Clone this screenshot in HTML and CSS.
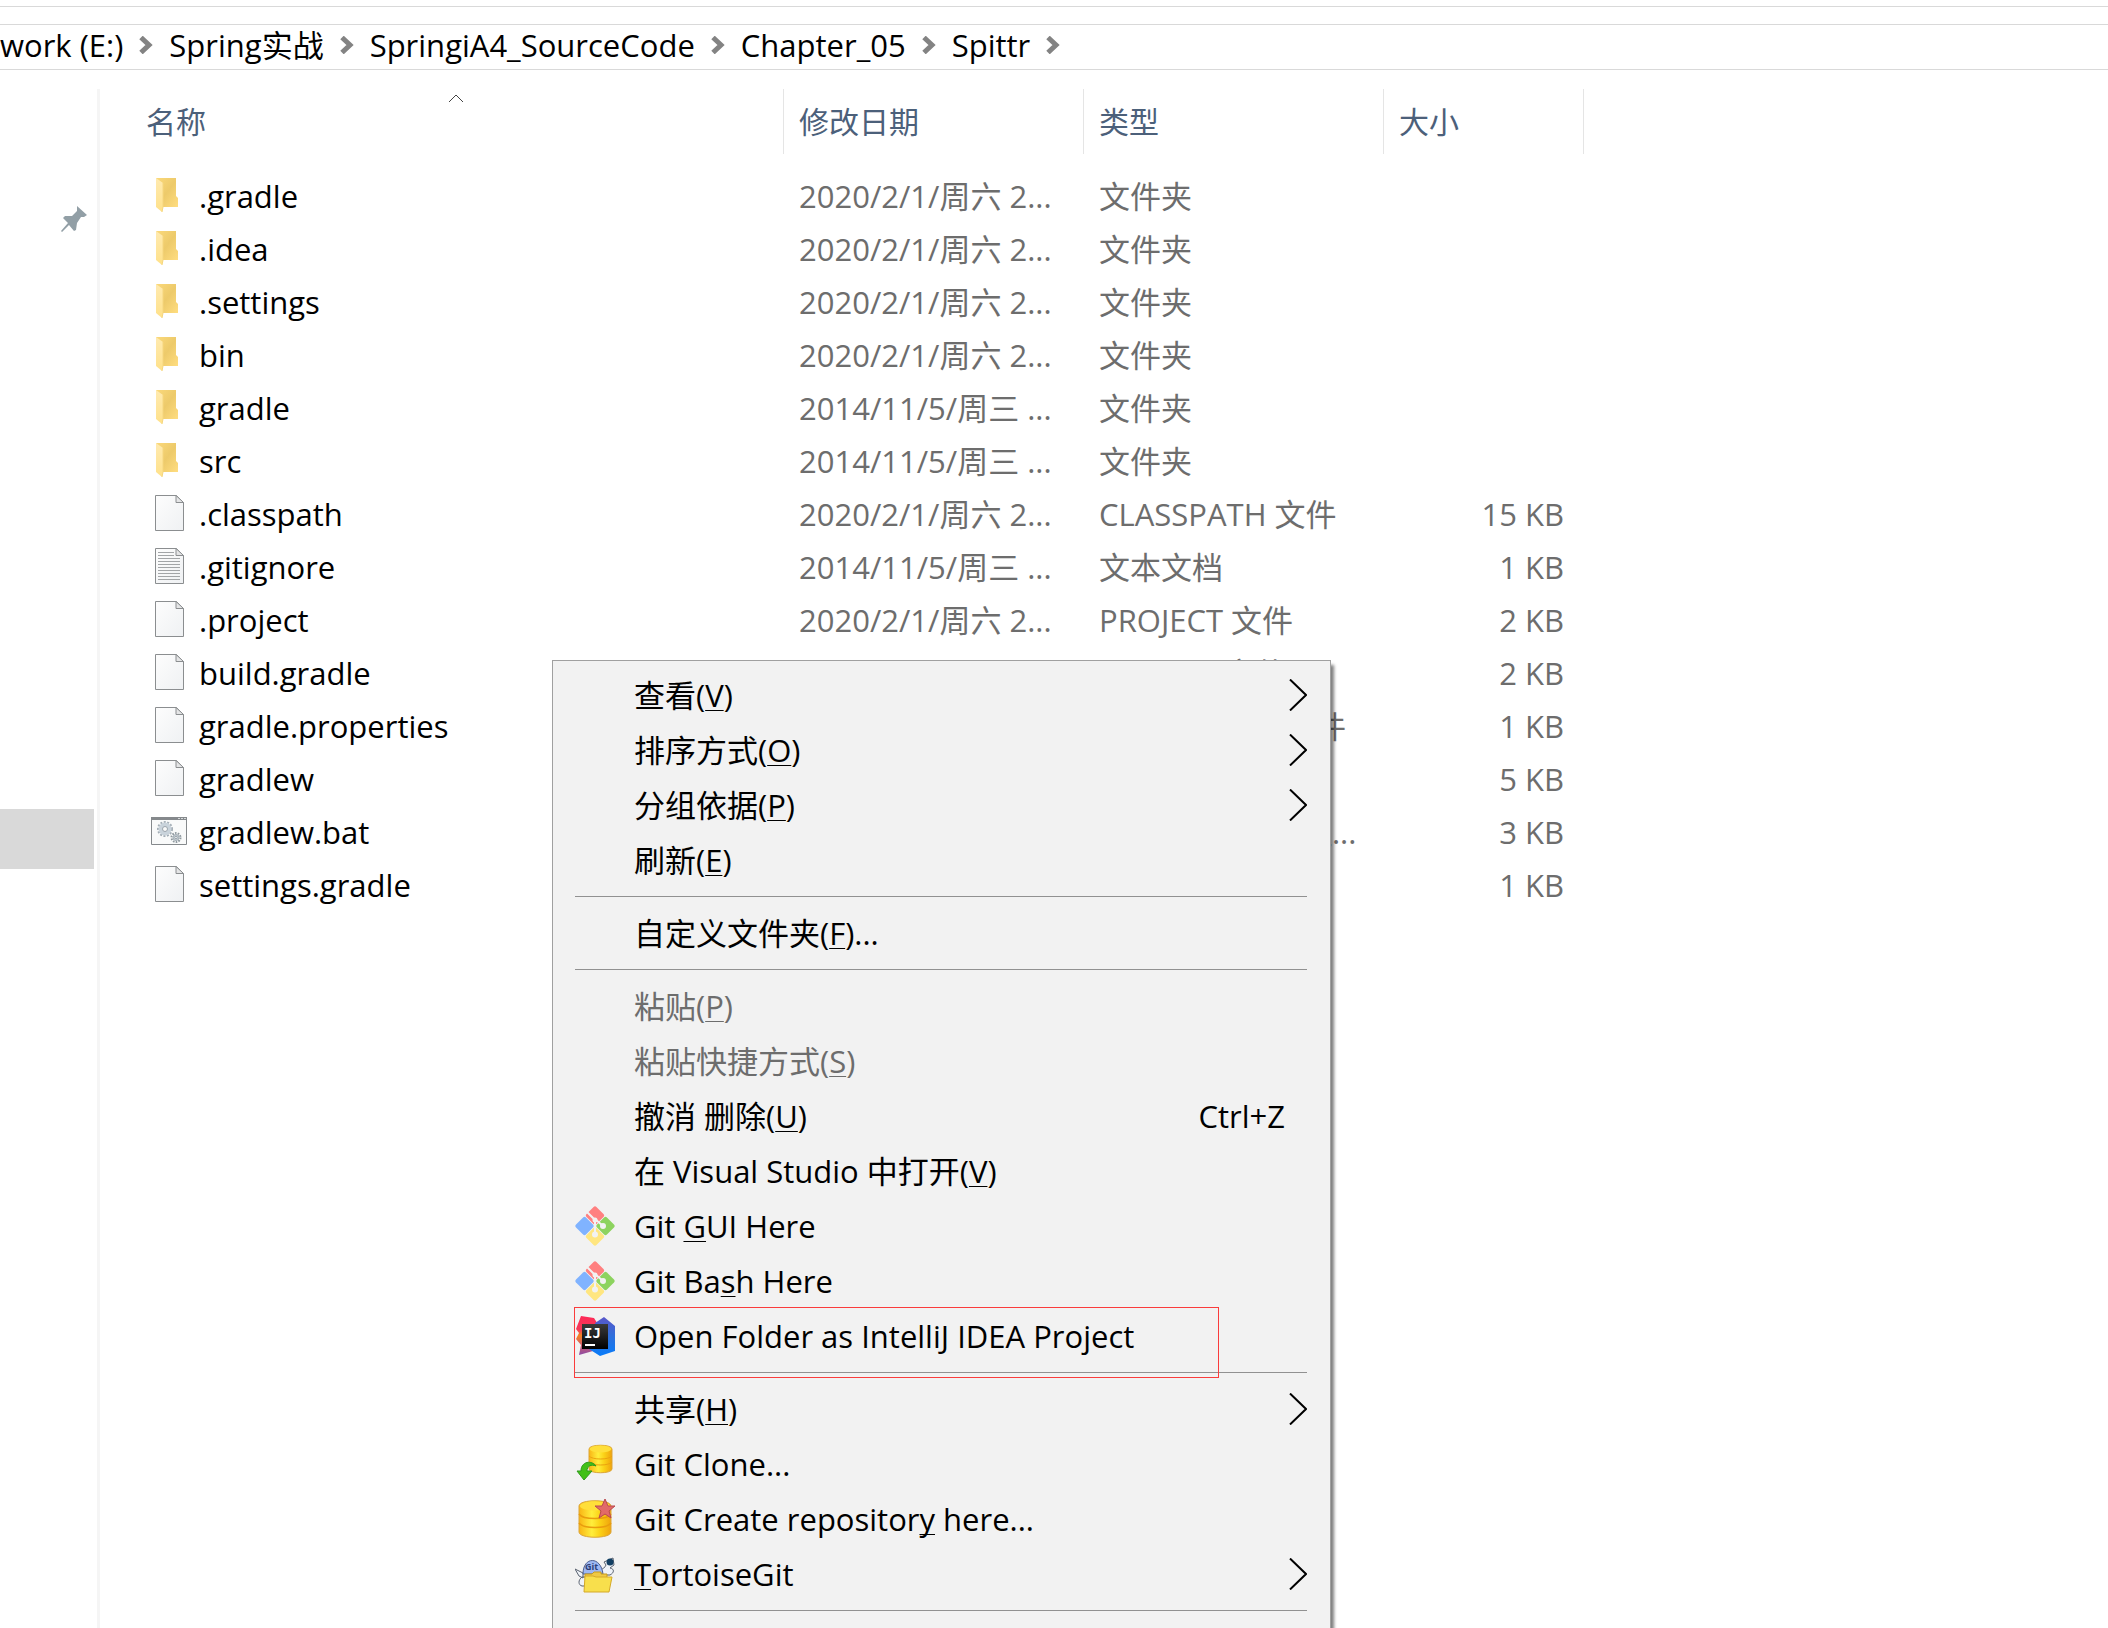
FILE: index.html
```
<!DOCTYPE html>
<html lang="zh-CN">
<head>
    <meta charset="UTF-8">
    <meta name="viewport" content="width=device-width, initial-scale=1.0">
    <title>Spittr</title>
    <link rel="stylesheet" href="styles.css">
</head>
<body>
    <!-- shared icons -->
    <svg class="icon-defs" aria-hidden="true">
        <defs>
            <linearGradient id="folder-back" x1="0" y1="0" x2="1" y2="1">
                <stop offset="0" stop-color="#fbd97b"/>
                <stop offset="0.5" stop-color="#edca6a"/>
                <stop offset="1" stop-color="#ffdd80"/>
            </linearGradient>
            <linearGradient id="folder-front" x1="0" y1="0" x2="0" y2="1">
                <stop offset="0" stop-color="#ffeab0"/>
                <stop offset="1" stop-color="#ffe189"/>
            </linearGradient>
            <linearGradient id="paper" x1="0" y1="0" x2="1" y2="1">
                <stop offset="0" stop-color="#fdfdfd"/>
                <stop offset="1" stop-color="#eff1f3"/>
            </linearGradient>
            <linearGradient id="gold" x1="0" y1="0" x2="1" y2="0">
                <stop offset="0" stop-color="#f9b414"/>
                <stop offset="0.4" stop-color="#ffee3c"/>
                <stop offset="0.65" stop-color="#fbd217"/>
                <stop offset="1" stop-color="#f0a30c"/>
            </linearGradient>
            <linearGradient id="idea-left" x1="0" y1="0" x2="0" y2="1">
                <stop offset="0" stop-color="#fe2857"/>
                <stop offset="0.35" stop-color="#f43a58"/>
                <stop offset="0.5" stop-color="#f58220"/>
                <stop offset="0.7" stop-color="#d9635f"/>
                <stop offset="1" stop-color="#8b4aa8"/>
            </linearGradient>
            <linearGradient id="idea-right" x1="0" y1="0" x2="0" y2="1">
                <stop offset="0" stop-color="#5a57c9"/>
                <stop offset="0.5" stop-color="#2d6fdc"/>
                <stop offset="1" stop-color="#087cfa"/>
            </linearGradient>
            <linearGradient id="idea-box" x1="0" y1="0" x2="0" y2="1">
                <stop offset="0" stop-color="#3a3a3a"/>
                <stop offset="1" stop-color="#000"/>
            </linearGradient>
        </defs>
        <symbol id="icon-folder" viewBox="0 0 36 36">
            <path d="M5 1h20v18l2 2v9H11z" fill="url(#folder-back)"/>
            <path d="M5 1l7 5v24l-1 5-6-5z" fill="url(#folder-front)"/>
            <path d="M12 6v24l-1 5" fill="none" stroke="#f5d67e"/>
        </symbol>
        <symbol id="icon-file" viewBox="0 0 36 36">
            <path d="M4.500.500h21l7 7v28h-28z" fill="url(#paper)" stroke="#8b8e90"/>
            <path d="M25 .500v7h7.500z" fill="#e4e5e6" stroke="#8b8e90"/>
        </symbol>
        <symbol id="icon-text" viewBox="0 0 36 36">
            <path d="M4.500.500h21l7 7v28h-28z" fill="url(#paper)" stroke="#8b8e90"/>
            <path d="M25 .500v7h7.500z" fill="#e4e5e6" stroke="#8b8e90"/>
            <path d="M7 4.500h16M7 7.500h16M7 10.500h22M7 13.500h22M7 16.500h22M7 19.500h22M7 22.500h22M7 25.500h22M7 28.500h22M7 31.500h22" stroke="#a2a5a7"/>
        </symbol>
        <symbol id="icon-batch" viewBox="0 0 36 36">
            <path d="M.500 4.500h35v27H.500z" fill="#f9fafa" stroke="#85898c"/>
            <path d="M0 4h36v3H0z" fill="#85898c"/>
            <path d="M27 5.500h2M30 5.500h2M33 5.500h2" stroke="#d7dadb"/>
            <circle cx="14" cy="16" r="7" fill="none" stroke="#a3adb5" stroke-width="2" stroke-dasharray="2 1.500"/>
            <circle cx="14" cy="16" r="4.500" fill="none" stroke="#c9d3db" stroke-width="4"/>
            <circle cx="14" cy="16" r="2.500" fill="#f9fafa" stroke="#98a2aa"/>
            <circle cx="25" cy="24.500" r="4.500" fill="none" stroke="#8f999f" stroke-width="2" stroke-dasharray="1.600 1.200"/>
            <circle cx="25" cy="24.500" r="3" fill="#c3ccd2" stroke="#a3adb5"/>
            <circle cx="25" cy="24.500" r="1.200" fill="#f9fafa" stroke="#98a2aa"/>
        </symbol>
        <symbol id="icon-crumb" viewBox="0 0 14 18">
            <path d="M2 1.500L10 9 2 16.500" fill="none" stroke="#838383" stroke-width="5"/>
        </symbol>
        <symbol id="icon-submenu" viewBox="0 0 18 32">
            <path d="M1 0.500L17 16 1 31.500" fill="none" stroke="#000" stroke-width="2"/>
        </symbol>
        <symbol id="icon-git" viewBox="0 0 40 40">
            <rect x="2.500" y="13" width="14" height="14" rx="2" fill="#80b3ff" transform="rotate(45 9.500 20)"/>
            <rect x="23.500" y="13" width="14" height="14" rx="2" fill="#8dd35f" transform="rotate(45 30.500 20)"/>
            <rect x="13" y="2.500" width="14" height="14" rx="2" fill="#ff8080" transform="rotate(45 20 9.500)"/>
            <rect x="13" y="23.500" width="14" height="14" rx="2" fill="#ffe680" transform="rotate(45 20 30.500)"/>
            <path d="M11 5l9 9v15M20 13l8 7" fill="none" stroke="#f2f2f2" stroke-width="2"/>
            <circle cx="20" cy="14" r="2.500" fill="#f2f2f2"/>
            <circle cx="28" cy="20" r="3" fill="#f2f2f2"/>
            <circle cx="20" cy="28.500" r="3" fill="#f2f2f2"/>
        </symbol>
        <symbol id="icon-clone" viewBox="0 0 40 40">
            <path d="M14 5c0-5 23-5 23 0v20c0 5-23 5-23 0z" fill="url(#gold)" stroke="#dba63a"/>
            <ellipse cx="25.500" cy="5" rx="11" ry="3.500" fill="#ffdf3a"/>
            <path d="M14 12c3 4 20 4 23 0M14 18c3 4 20 4 23 0" fill="none" stroke="#eba30e"/>
            <path d="M21 22c-4-6-15-5-15 5H2l7 9 8-9h-5c0-5 4-7 9-5z" fill="#41c018" stroke="#2f9a1c"/>
        </symbol>
        <symbol id="icon-create" viewBox="0 0 40 40">
            <path d="M4 7c0-7 32-7 32 0v26c0 7-32 7-32 0z" fill="url(#gold)" stroke="#dba63a"/>
            <ellipse cx="20" cy="7" rx="15" ry="4.500" fill="#ffdf3a"/>
            <path d="M4 15c4 6 28 6 32 0M4 24c4 6 28 6 32 0" fill="none" stroke="#e99c0d" stroke-width="1.500"/>
            <path d="M30 0l3 7h7l-6 5 2 7-6-4-6 4 2-7-6-5h7z" fill="#e26a68" stroke="#b94a4e"/>
        </symbol>
    </svg>

    <div class="explorer">
        <header class="address-area">
            <nav class="address-bar" aria-label="路径">
                <a href="#" class="crumb">work (E:)</a>
                <svg class="crumb-arrow"><use href="#icon-crumb"/></svg>
                <a href="#" class="crumb">Spring实战</a>
                <svg class="crumb-arrow"><use href="#icon-crumb"/></svg>
                <a href="#" class="crumb">SpringiA4_SourceCode</a>
                <svg class="crumb-arrow"><use href="#icon-crumb"/></svg>
                <a href="#" class="crumb">Chapter_05</a>
                <svg class="crumb-arrow"><use href="#icon-crumb"/></svg>
                <a href="#" class="crumb">Spittr</a>
                <svg class="crumb-arrow"><use href="#icon-crumb"/></svg>
            </nav>
        </header>

        <div class="content">
            <aside class="sidebar">
                <div class="sidebar-item">
                    <svg class="pin-icon" viewBox="0 0 26 26">
                        <path d="M16 0l10 9-3 2-3 0-4 6-1 7-2 1-5-6-7 7-1-1 7-8-5-5 2-2 7 0 5-5z" fill="#929fa6"/>
                    </svg>
                </div>
                <div class="sidebar-item selected"></div>
            </aside>

            <main class="file-pane">
                <table class="file-table">
                    <colgroup>
                        <col class="col-name">
                        <col class="col-date">
                        <col class="col-type">
                        <col class="col-size">
                    </colgroup>
                    <thead>
                        <tr>
                            <th aria-sort="ascending">名称
                                <svg class="sort-icon" viewBox="0 0 16 10"><path d="M1 9l7-7 7 7" fill="none" stroke="#444"/></svg>
                            </th>
                            <th>修改日期</th>
                            <th>类型</th>
                            <th>大小</th>
                        </tr>
                    </thead>
                    <tbody>
                        <tr>
                            <td><div class="file-name"><svg class="file-icon"><use href="#icon-folder"/></svg>.gradle</div></td>
                            <td>2020/2/1/周六 2...</td><td>文件夹</td><td></td>
                        </tr>
                        <tr>
                            <td><div class="file-name"><svg class="file-icon"><use href="#icon-folder"/></svg>.idea</div></td>
                            <td>2020/2/1/周六 2...</td><td>文件夹</td><td></td>
                        </tr>
                        <tr>
                            <td><div class="file-name"><svg class="file-icon"><use href="#icon-folder"/></svg>.settings</div></td>
                            <td>2020/2/1/周六 2...</td><td>文件夹</td><td></td>
                        </tr>
                        <tr>
                            <td><div class="file-name"><svg class="file-icon"><use href="#icon-folder"/></svg>bin</div></td>
                            <td>2020/2/1/周六 2...</td><td>文件夹</td><td></td>
                        </tr>
                        <tr>
                            <td><div class="file-name"><svg class="file-icon"><use href="#icon-folder"/></svg>gradle</div></td>
                            <td>2014/11/5/周三 ...</td><td>文件夹</td><td></td>
                        </tr>
                        <tr>
                            <td><div class="file-name"><svg class="file-icon"><use href="#icon-folder"/></svg>src</div></td>
                            <td>2014/11/5/周三 ...</td><td>文件夹</td><td></td>
                        </tr>
                        <tr>
                            <td><div class="file-name"><svg class="file-icon"><use href="#icon-file"/></svg>.classpath</div></td>
                            <td>2020/2/1/周六 2...</td><td>CLASSPATH 文件</td><td class="size">15 KB</td>
                        </tr>
                        <tr>
                            <td><div class="file-name"><svg class="file-icon"><use href="#icon-text"/></svg>.gitignore</div></td>
                            <td>2014/11/5/周三 ...</td><td>文本文档</td><td class="size">1 KB</td>
                        </tr>
                        <tr>
                            <td><div class="file-name"><svg class="file-icon"><use href="#icon-file"/></svg>.project</div></td>
                            <td>2020/2/1/周六 2...</td><td>PROJECT 文件</td><td class="size">2 KB</td>
                        </tr>
                        <tr>
                            <td><div class="file-name"><svg class="file-icon"><use href="#icon-file"/></svg>build.gradle</div></td>
                            <td></td><td>GRADLE 文件</td><td class="size">2 KB</td>
                        </tr>
                        <tr>
                            <td><div class="file-name"><svg class="file-icon"><use href="#icon-file"/></svg>gradle.properties</div></td>
                            <td></td><td>PROPERTIES 文件</td><td class="size">1 KB</td>
                        </tr>
                        <tr>
                            <td><div class="file-name"><svg class="file-icon"><use href="#icon-file"/></svg>gradlew</div></td>
                            <td></td><td>文件</td><td class="size">5 KB</td>
                        </tr>
                        <tr>
                            <td><div class="file-name"><svg class="file-icon"><use href="#icon-batch"/></svg>gradlew.bat</div></td>
                            <td></td><td>Windows 批处理...</td><td class="size">3 KB</td>
                        </tr>
                        <tr>
                            <td><div class="file-name"><svg class="file-icon"><use href="#icon-file"/></svg>settings.gradle</div></td>
                            <td></td><td>GRADLE 文件</td><td class="size">1 KB</td>
                        </tr>
                    </tbody>
                </table>
            </main>
        </div>

        <div class="context-menu" role="menu">
            <button type="button" class="menu-item" role="menuitem"><span class="menu-label">查看(<u>V</u>)</span><svg class="submenu-arrow"><use href="#icon-submenu"/></svg></button>
            <button type="button" class="menu-item" role="menuitem"><span class="menu-label">排序方式(<u>O</u>)</span><svg class="submenu-arrow"><use href="#icon-submenu"/></svg></button>
            <button type="button" class="menu-item" role="menuitem"><span class="menu-label">分组依据(<u>P</u>)</span><svg class="submenu-arrow"><use href="#icon-submenu"/></svg></button>
            <button type="button" class="menu-item" role="menuitem"><span class="menu-label">刷新(<u>E</u>)</span></button>
            <hr class="menu-separator">
            <button type="button" class="menu-item" role="menuitem"><span class="menu-label">自定义文件夹(<u>F</u>)...</span></button>
            <hr class="menu-separator">
            <button type="button" class="menu-item" role="menuitem" disabled><span class="menu-label">粘贴(<u>P</u>)</span></button>
            <button type="button" class="menu-item" role="menuitem" disabled><span class="menu-label">粘贴快捷方式(<u>S</u>)</span></button>
            <button type="button" class="menu-item" role="menuitem"><span class="menu-label">撤消 删除(<u>U</u>)</span><span class="shortcut">Ctrl+Z</span></button>
            <button type="button" class="menu-item" role="menuitem"><span class="menu-label">在 Visual Studio 中打开(<u>V</u>)</span></button>
            <button type="button" class="menu-item" role="menuitem"><svg class="menu-icon"><use href="#icon-git"/></svg><span class="menu-label">Git <u>G</u>UI Here</span></button>
            <button type="button" class="menu-item" role="menuitem"><svg class="menu-icon"><use href="#icon-git"/></svg><span class="menu-label">Git Ba<u>s</u>h Here</span></button>
            <button type="button" class="menu-item marked" role="menuitem">
                <svg class="menu-icon" viewBox="0 0 40 40">
                    <path d="M6 0l13 2 7 11-8 22L4 39l2-10-5-6 3-6-3-4z" fill="url(#idea-left)"/>
                    <path d="M20 7l9-6 11 9v25l-15 5-11-7 8-20z" fill="url(#idea-right)"/>
                    <path d="M7 8h26v25H7z" fill="url(#idea-box)"/>
                    <text x="9" y="22" class="idea-letters">IJ</text>
                    <path d="M10 28h10v2H10z" fill="#fff"/>
                </svg>
                <span class="menu-label">Open Folder as IntelliJ IDEA Project</span>
            </button>
            <hr class="menu-separator">
            <button type="button" class="menu-item" role="menuitem"><span class="menu-label">共享(<u>H</u>)</span><svg class="submenu-arrow"><use href="#icon-submenu"/></svg></button>
            <button type="button" class="menu-item" role="menuitem"><svg class="menu-icon"><use href="#icon-clone"/></svg><span class="menu-label">Git Clone...</span></button>
            <button type="button" class="menu-item" role="menuitem"><svg class="menu-icon"><use href="#icon-create"/></svg><span class="menu-label">Git Create repositor<u>y</u> here...</span></button>
            <button type="button" class="menu-item" role="menuitem">
                <svg class="menu-icon" viewBox="0 0 40 40">
                    <path d="M8 19l-8-4 4 7 4 2zM7 23c-4 3-4 8 0 9h4v-9zM26 16c2-2 4-2 5-5l-2-3 9-4 1 7-4 3c5 1 4 5 0 7h-9z" fill="#eef2f8" stroke="#59616f"/>
                    <path d="M8 20C8 2 26 2 28 20z" fill="#9db7f2" stroke="#4d5f8f"/>
                    <text x="10" y="16" class="tortoise-letters">Git</text>
                    <circle cx="35" cy="8" r="3.500" fill="#123f63"/>
                    <path d="M10 20h7l2-2h7v2h6v4H10z" fill="#efc944" stroke="#c79b1f"/>
                    <path d="M9 38l1-16h8l3 1h16l-3 15z" fill="#f8df4c" stroke="#d5a928"/>
                </svg>
                <span class="menu-label"><u>T</u>ortoiseGit</span>
                <svg class="submenu-arrow"><use href="#icon-submenu"/></svg>
            </button>
            <hr class="menu-separator">
        </div>
    </div>
</body>
</html>
```
FILE: styles.css
```
* {
    box-sizing: border-box;
}

body {
    margin: 0;
    background: #fff;
    color: #000;
    font-family: "Open Sans", "Noto Sans CJK SC", sans-serif;
    font-size: 31px;
    overflow: hidden;
}

.icon-defs {
    position: absolute;
    width: 0;
    height: 0;
}

.explorer {
    position: relative;
    display: flex;
    flex-direction: column;
    height: 100vh;
    overflow: hidden;
}

/* address bar */
.address-area {
    margin-top: 6px;
    padding-top: 17px;
    border-top: 1px solid #d9d9d9;
}

.address-bar {
    display: flex;
    align-items: center;
    gap: 16px;
    height: 46px;
    padding-bottom: 4px;
    border-top: 1px solid #d9d9d9;
    border-bottom: 1px solid #d9d9d9;
}

.crumb {
    color: #000;
    text-decoration: none;
    line-height: 40px;
    white-space: nowrap;
}

.crumb-arrow {
    width: 14px;
    height: 18px;
    flex: none;
}

/* sidebar */
.content {
    display: flex;
    flex: 1;
    padding-top: 19px;
}

.sidebar {
    width: 100px;
    flex: none;
    padding-top: 100px;
    border-right: 3px solid #f5f5f5;
}

.sidebar-item {
    display: flex;
    align-items: center;
    justify-content: flex-end;
    height: 60px;
    margin-right: 3px;
    padding-right: 7px;
}

.sidebar-item.selected {
    margin-top: 560px;
    background: #d9d9d9;
}

.pin-icon {
    width: 26px;
    height: 26px;
}

/* file list */
.file-pane {
    flex: 1;
    min-width: 0;
}

.file-table {
    table-layout: fixed;
    width: 1484px;
    border-collapse: separate;
    border-spacing: 0;
}

.col-name {
    width: 684px;
}

.col-date,
.col-type {
    width: 300px;
}

.col-size {
    width: 200px;
}

.file-table th {
    position: relative;
    height: 65px;
    padding: 0 15px 3px;
    border-right: 1px solid #e5e5e5;
    color: #4c607a;
    font-size: 30px;
    font-weight: 400;
    text-align: left;
}

.file-table th:first-child {
    padding-left: 46px;
}

.sort-icon {
    position: absolute;
    top: 4px;
    left: 51%;
    width: 16px;
    height: 10px;
}

.file-table tbody::before {
    content: "";
    display: block;
    height: 16px;
}

.file-table td {
    height: 53px;
    padding: 0 15px;
    color: #6d6d6d;
    line-height: 53px;
    white-space: nowrap;
}

.file-table td:first-child {
    padding-left: 51px;
    color: #000;
}

.file-table .size {
    padding-right: 20px;
    text-align: right;
}

.file-name {
    display: flex;
    align-items: center;
    gap: 12px;
}

.file-icon {
    width: 36px;
    height: 36px;
    margin-bottom: 4px;
    flex: none;
}

/* context menu */
.context-menu {
    position: absolute;
    top: 660px;
    left: 552px;
    width: 779px;
    padding: 8px 0;
    background: #f2f2f2;
    border: 1px solid #a0a0a0;
    box-shadow: 4px 4px 3px -1px rgba(0, 0, 0, 0.5);
}

.menu-item {
    position: relative;
    display: flex;
    align-items: center;
    width: 100%;
    height: 55px;
    padding: 0 23px 3px 22px;
    border: none;
    background: none;
    color: #000;
    font: inherit;
    line-height: 52px;
    text-align: left;
    white-space: nowrap;
}

.menu-item:disabled {
    color: #6d6d6d;
}

.menu-item u {
    text-decoration-thickness: 1px;
    text-underline-offset: 3px;
    text-decoration-skip-ink: none;
}

.menu-icon {
    width: 40px;
    height: 40px;
    flex: none;
}

.menu-label {
    flex: 1;
    margin-left: 59px;
}

.menu-icon + .menu-label {
    margin-left: 19px;
}

.shortcut {
    margin-right: 22px;
}

.submenu-arrow {
    width: 18px;
    height: 32px;
    flex: none;
}

.menu-separator {
    height: 1px;
    margin: 7px 23px 10px 22px;
    border: none;
    background: #919191;
}

/* red frame around the IDEA entry */
.menu-item.marked::after {
    content: "";
    position: absolute;
    top: -3px;
    left: 21px;
    z-index: 1;
    width: 645px;
    height: 71px;
    box-sizing: border-box;
    border: 1px solid #fa3c3c;
}

.idea-letters {
    font-family: "DejaVu Sans Mono", monospace;
    font-size: 14px;
    font-weight: 700;
    fill: #fff;
}

.tortoise-letters {
    font-size: 9px;
    font-weight: 700;
    fill: #2c3f78;
}
```
